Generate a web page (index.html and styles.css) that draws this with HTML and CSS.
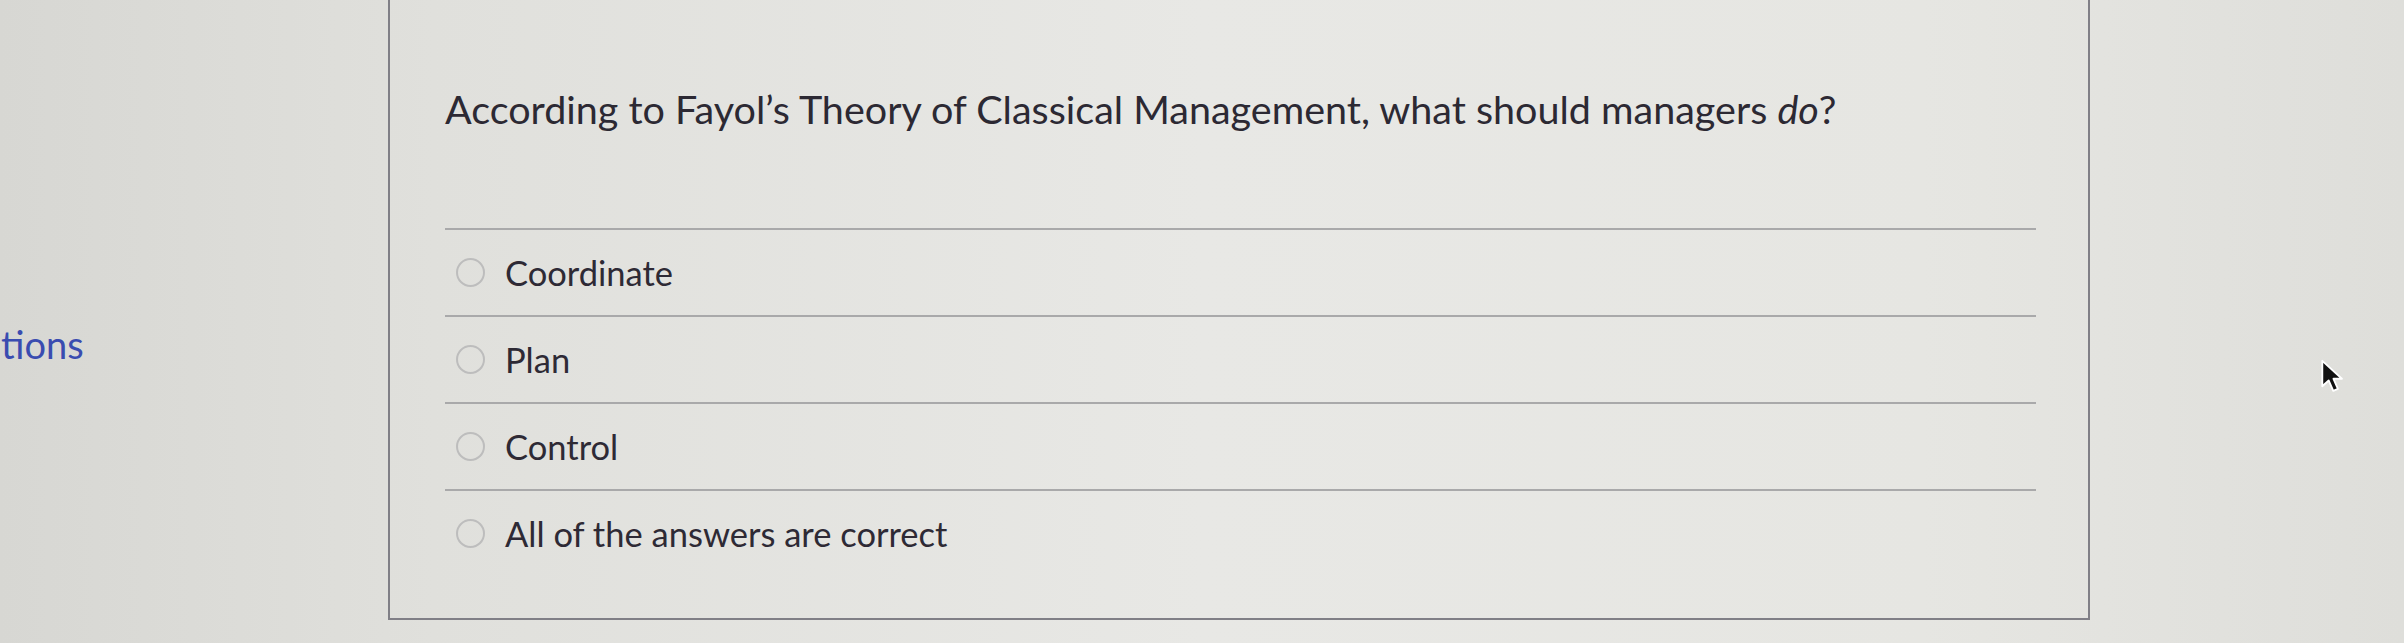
FILE: index.html
```html
<!DOCTYPE html>
<html lang="en">
<head>
<meta charset="utf-8">
<title>Quiz question</title>
<link rel="stylesheet" href="styles.css">
</head>
<body>
<div class="page">
  <aside class="side">
    <span class="side-link">tions</span>
  </aside>
  <main class="card">
    <p class="question">According to Fayol’s Theory of Classical Management, what should managers <em>do</em>?</p>
    <ul class="answers">
      <li class="answer"><span class="radio"></span><span class="answer-text">Coordinate</span></li>
      <li class="answer"><span class="radio"></span><span class="answer-text">Plan</span></li>
      <li class="answer"><span class="radio"></span><span class="answer-text">Control</span></li>
      <li class="answer"><span class="radio"></span><span class="answer-text">All of the answers are correct</span></li>
    </ul>
  </main>
  <svg class="cursor" width="30" height="40" viewBox="0 0 26 32" aria-hidden="true">
    <path d="M2 2 L2 24 L7.5 19 L11.5 28 L15.5 26.3 L11.6 17.5 L19 17.5 Z" fill="#111" stroke="#fff" stroke-width="1.6" stroke-linejoin="round"/>
  </svg>
</div>
</body>
</html>
```

FILE: styles.css
```css
html, body {
  margin: 0;
  padding: 0;
}

body {
  width: 2404px;
  height: 643px;
  overflow: hidden;
  background: linear-gradient(90deg, #d7d7d3 0%, #e0e0dc 18%, #e8e8e5 50%, #e6e6e2 80%, #dededa 100%);
  font-family: Lato, "Open Sans", "Liberation Sans", sans-serif;
  color: #2e2a35;
}

.page {
  position: relative;
  display: flex;
  align-items: flex-start;
  height: 643px;
}

.side {
  width: 388px;
  flex: none;
  padding-top: 322px;
}

.side-link {
  display: block;
  font-size: 38px;
  line-height: 44px;
  color: #3a4cb0;
  margin-left: 1px;
}

.card {
  width: 1702px;
  flex: none;
  height: 620px;
  border-left: 2px solid #807f86;
  border-right: 2px solid #807f86;
  border-bottom: 2px solid #807f86;
  padding: 0 52px 0 55px;
  box-sizing: border-box;
}

.question {
  margin: 0;
  padding-top: 86px;
  font-size: 39.5px;
  line-height: 46px;
  color: #2c2933;
}

.question em {
  font-style: italic;
}

.answers {
  list-style: none;
  margin: 96px 0 0 0;
  padding: 0;
}

.answer {
  display: flex;
  align-items: center;
  height: 85px;
  border-top: 2px solid #a9a9aa;
  padding-left: 11px;
}

.radio {
  width: 29px;
  height: 29px;
  box-sizing: border-box;
  border: 2px solid #bdbdbd;
  border-radius: 50%;
  flex: none;
  margin-right: 20px;
}

.answer-text {
  font-size: 34.5px;
  line-height: 40px;
  color: #2e2a35;
}

.cursor {
  position: absolute;
  left: 2320px;
  top: 357px;
}
```
